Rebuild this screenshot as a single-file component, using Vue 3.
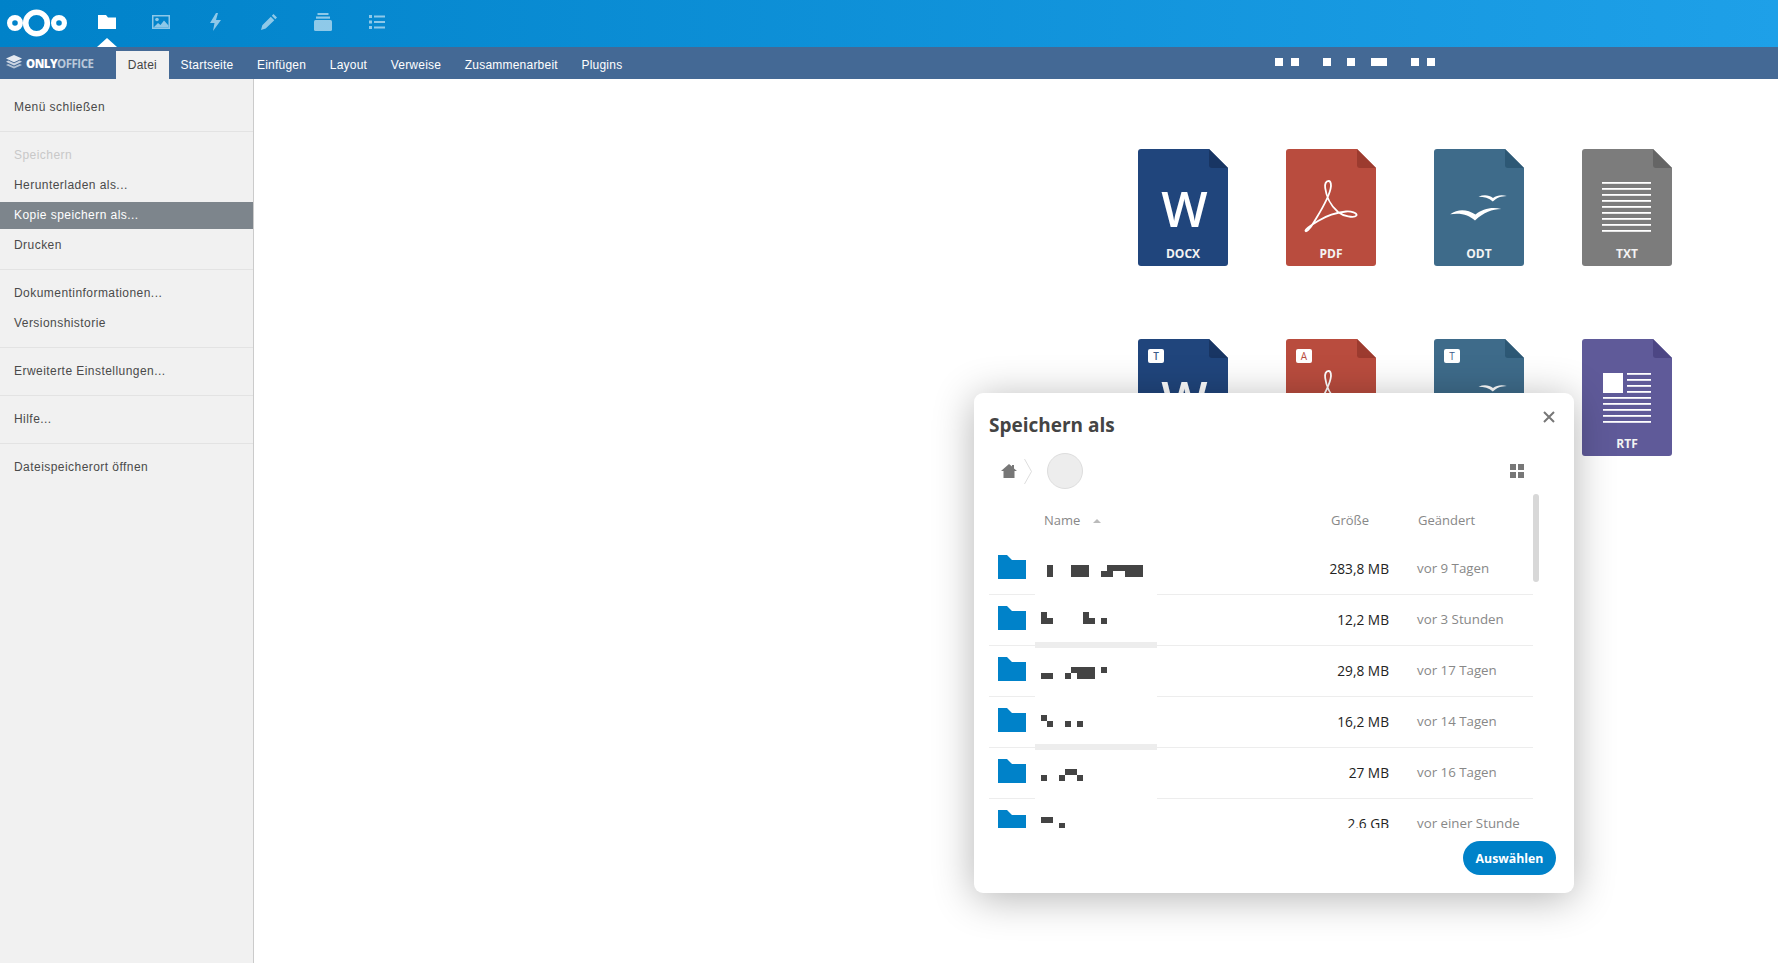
<script setup>
const sections = [
  [{ label: 'Menü schließen' }],
  [
    { label: 'Speichern', disabled: true },
    { label: 'Herunterladen als...' },
    { label: 'Kopie speichern als...', active: true },
    { label: 'Drucken' },
  ],
  [{ label: 'Dokumentinformationen...' }, { label: 'Versionshistorie' }],
  [{ label: 'Erweiterte Einstellungen...' }],
  [{ label: 'Hilfe...' }],
  [{ label: 'Dateispeicherort öffnen' }],
]

const tabs = ['Datei', 'Startseite', 'Einfügen', 'Layout', 'Verweise', 'Zusammenarbeit', 'Plugins']

// blanked out title in the tab bar: [width, gap before]
const titleBlocks = [[8, 0], [8, 8], [8, 24], [8, 16], [16, 16], [8, 24], [8, 8]]

const formats = [
  { name: 'DOCX', color: '#20457c', fold: '#183563', art: 'word' },
  { name: 'PDF', color: '#b94c3e', fold: '#9c3b2f', art: 'pdf' },
  { name: 'ODT', color: '#3e6b8a', fold: '#2d5875', art: 'odt' },
  { name: 'TXT', color: '#7c7c7c', fold: '#656565', art: 'txt' },
  { name: '', color: '#20457c', fold: '#183563', art: 'word', badge: 'T' },
  { name: '', color: '#b94c3e', fold: '#9c3b2f', art: 'pdf', badge: 'A' },
  { name: '', color: '#3e6b8a', fold: '#2d5875', art: 'odt', badge: 'T' },
  { name: 'RTF', color: '#5f5a99', fold: '#4c4684', art: 'rtf' },
]

const txtLines = [34, 40, 46, 52, 58, 64, 70, 76, 82]

// file names are pixelated in the original: [x, y, w, h]
const files = [
  { size: '283,8 MB', date: 'vor 9 Tagen', cover: 'white', blocks: [[11, 21, 6, 12], [35, 21, 18, 12], [65, 27, 12, 6], [71, 21, 36, 6], [89, 27, 18, 6]] },
  { size: '12,2 MB', date: 'vor 3 Stunden', cover: 'grey', blocks: [[5, 17, 6, 6], [5, 23, 12, 6], [47, 17, 6, 6], [47, 23, 12, 6], [65, 23, 6, 6]] },
  { size: '29,8 MB', date: 'vor 17 Tagen', cover: 'white', blocks: [[5, 27, 12, 6], [29, 27, 6, 6], [35, 21, 24, 6], [41, 27, 18, 6], [65, 21, 6, 6]] },
  { size: '16,2 MB', date: 'vor 14 Tagen', cover: 'grey', blocks: [[5, 18, 6, 6], [11, 24, 6, 6], [29, 24, 6, 6], [41, 24, 6, 6]] },
  { size: '27 MB', date: 'vor 16 Tagen', cover: 'white', blocks: [[5, 27, 6, 6], [23, 27, 6, 6], [29, 21, 12, 6], [41, 27, 6, 6]] },
  { size: '2,6 GB', date: 'vor einer Stunde', cover: 'none', blocks: [[5, 18, 12, 6], [23, 24, 6, 6]] },
]
</script>

<template>
  <div class="page">
    <header class="topbar">
      <svg class="logo" width="60" height="28" viewBox="0 0 60 28">
        <g fill="none" stroke="#fff">
          <circle cx="8" cy="14" r="5.4" stroke-width="5.2" />
          <circle cx="29.5" cy="14" r="10.8" stroke-width="5.6" />
          <circle cx="52" cy="14" r="5.4" stroke-width="5.2" />
        </g>
      </svg>
      <nav class="apps">
        <a class="app active">
          <svg width="18" height="14" viewBox="0 0 18 14"><path d="M0 0h8l2 2.5h8V14H0z" /></svg>
        </a>
        <a class="app">
          <svg width="18" height="14" viewBox="0 0 18 14">
            <path fill-rule="evenodd" d="M0 0h18v14H0zM1.5 1.5v11h15v-11z" />
            <circle cx="5" cy="4.5" r="1.8" />
            <path d="M1.5 12.5L6 8l2.5 2L12 5.5l4.5 5v2z" />
          </svg>
        </a>
        <a class="app">
          <svg width="12" height="18" viewBox="0 0 12 18"><path d="M7 0L1 10h4.5L4 18l8-11H7l2-7z" /></svg>
        </a>
        <a class="app">
          <svg width="16" height="16" viewBox="0 0 16 16"><path d="M12.5 0L16 3.5l-1.7 1.7-3.5-3.5zM9.8 2.7l3.5 3.5-8.6 8.3L0 16l1.3-4.8z" /></svg>
        </a>
        <a class="app">
          <svg width="18" height="18" viewBox="0 0 18 18">
            <rect x="3.5" width="11" height="2" />
            <rect x="2" y="3.5" width="14" height="2.2" />
            <rect y="7" width="18" height="11" rx="1.5" />
          </svg>
        </a>
        <a class="app">
          <svg width="16" height="16" viewBox="0 0 16 16">
            <path d="M0 1h3v3H0zM5 1.5h11v2H5zM0 6.5h3v3H0zM5 7h11v2H5zM0 12h3v3H0zM5 12.5h11v2H5z" />
          </svg>
        </a>
      </nav>
    </header>

    <div class="tabbar">
      <div class="brand">
        <svg width="16" height="14" viewBox="0 0 16 14" fill="#e4e9f0">
          <path d="M8 0l8 3.6L8 7.2 0 3.6z" />
          <path d="M2.2 5.6L8 8.2l5.8-2.6L16 6.8 8 10.4 0 6.8z" opacity=".85" />
          <path d="M2.2 8.9L8 11.4l5.8-2.5L16 10l-8 3.6L0 10z" opacity=".7" />
        </svg>
        <span><b>ONLY</b>OFFICE</span>
      </div>
      <div class="tabs">
        <span v-for="(tab, i) in tabs" :key="tab" class="tab" :class="{ current: i === 0 }">{{ tab }}</span>
      </div>
      <div class="doc-title">
        <i v-for="(b, i) in titleBlocks" :key="i" :style="{ width: b[0] + 'px', marginLeft: b[1] + 'px' }"></i>
      </div>
    </div>

    <div class="body">
      <aside class="sidebar">
        <div v-for="(section, i) in sections" :key="i" class="section">
          <div
            v-for="item in section"
            :key="item.label"
            class="item"
            :class="{ disabled: item.disabled, active: item.active }"
          >{{ item.label }}</div>
        </div>
      </aside>

      <main class="content">
        <div class="formats">
          <svg v-for="(f, i) in formats" :key="i" class="format" width="90" height="117" viewBox="0 0 90 117">
            <path :fill="f.color" d="M3 0H71L90 19V114a3 3 0 0 1-3 3H3a3 3 0 0 1-3-3V3a3 3 0 0 1 3-3z" />
            <path :fill="f.fold" d="M71 0L90 19H74a3 3 0 0 1-3-3z" />

            <template v-if="f.badge">
              <rect x="10" y="10" width="16" height="14" rx="2" fill="#fff" />
              <text x="18" y="21" class="badge" :class="f.art">{{ f.badge }}</text>
            </template>

            <text v-if="f.art === 'word'" x="46.5" y="78" class="word">W</text>
            <path
              v-if="f.art === 'pdf'"
              fill="none"
              stroke="#fff"
              stroke-width="1.8"
              d="M45 37C45 33 44 32 42.5 32C40 32 38.5 35 39.2 39C40 46 44 56 52 63C57 67 68 69.5 70.5 66.5C71.5 64 65 62 60 62.5C50 63.5 40 67 32 72C27 75 20 79 19.5 81.5C19.5 84 24 80 28 73C34 63 44 48 45 37Z"
            />
            <g v-if="f.art === 'odt'" fill="#fff">
              <path d="M16.2 65.3C24 59.5 33 60 41.5 65.5C48 60 58 57.5 67.2 60C58 60.5 50 63 41 71.5C35 66 27 63.5 16.2 65.3Z" />
              <path d="M44.5 47.7C50 45.5 55 46 59 49C63 46 68 45.5 72.8 47C67 47.3 63 48.5 58.8 52.5C55 49 50 47.7 44.5 47.7Z" />
            </g>
            <g v-if="f.art === 'txt'" fill="#fff">
              <rect v-for="y in txtLines" :key="y" x="20" :y="y - 1" width="49" height="1.8" />
            </g>
            <g v-if="f.art === 'rtf'" fill="#fff">
              <rect x="21" y="34" width="20" height="20" />
              <rect v-for="y in [34, 40, 46, 52]" :key="y" x="45" :y="y" width="24" height="1.8" />
              <rect v-for="y in [58, 64, 70, 76, 82]" :key="y" x="21" :y="y" width="48" height="1.8" />
            </g>

            <text x="45" y="109" class="ext">{{ f.name }}</text>
          </svg>
        </div>
      </main>
    </div>

    <section class="dialog">
      <svg class="close" width="12" height="12" viewBox="0 0 12 12"><path d="M1 1l10 10M11 1L1 11" stroke="#777" stroke-width="2" /></svg>
      <h2>Speichern als</h2>

      <div class="crumbs">
        <svg class="home" width="16" height="14" viewBox="0 0 16 14"><path d="M8 0l3 2.6V1h2v3.4L16 7h-2.5v7h-11V7H0z" fill="#777" /></svg>
        <svg class="chevron" width="8" height="25" viewBox="0 0 8 25"><path d="M.5 0l7 12.5-7 12.5" fill="none" stroke="#ddd" /></svg>
        <span class="avatar"></span>
        <svg class="view" width="14" height="14" viewBox="0 0 14 14" fill="#777">
          <rect width="6" height="6" /><rect x="8" width="6" height="6" />
          <rect y="8" width="6" height="6" /><rect x="8" y="8" width="6" height="6" />
        </svg>
      </div>

      <div class="head">
        <span class="col-name">Name <i class="sort"></i></span>
        <span class="col-size">Größe</span>
        <span class="col-date">Geändert</span>
      </div>

      <div class="list">
        <div v-for="(file, i) in files" :key="i" class="row">
          <svg class="folder" width="28" height="24" viewBox="0 0 28 24">
            <path fill="#0082c9" d="M0 0h9l5 5h14v19H0z" />
          </svg>
          <div class="name" :class="file.cover">
            <svg width="121" height="50" viewBox="0 0 121 50" fill="#444">
              <rect v-for="(b, j) in file.blocks" :key="j" :x="b[0]" :y="b[1]" :width="b[2]" :height="b[3]" />
            </svg>
          </div>
          <span class="size">{{ file.size }}</span>
          <span class="date">{{ file.date }}</span>
        </div>
      </div>
      <div class="scrollbar"></div>

      <div class="footer">
        <button class="choose">Auswählen</button>
      </div>
    </section>
  </div>
</template>

<style>
html, body {
  margin: 0;
  background: #fff;
}
</style>

<style scoped>
.page {
  position: relative;
  width: 1778px;
  height: 963px;
  overflow: hidden;
  display: flex;
  flex-direction: column;
  font-family: "Liberation Sans", Arial, sans-serif;
}

.topbar {
  height: 47px;
  flex: none;
  display: flex;
  align-items: flex-start;
  background: linear-gradient(90deg, #0082c9, #1ea0e8);
}
.logo {
  margin: 9px 0 0 7px;
  width: 60px;
  flex: none;
}
.apps {
  display: flex;
  margin-left: 13px;
}
.app {
  position: relative;
  width: 54px;
  height: 47px;
  box-sizing: border-box;
  padding-bottom: 3px;
  display: flex;
  align-items: center;
  justify-content: center;
}
.app svg {
  fill: #fff;
  opacity: .55;
}
.app.active svg {
  opacity: 1;
}
.app.active::after {
  content: "";
  position: absolute;
  bottom: 0;
  left: 17px;
  border-left: 10px solid transparent;
  border-right: 10px solid transparent;
  border-bottom: 9px solid #fff;
}

.tabbar {
  height: 32px;
  flex: none;
  display: flex;
  background: #446995;
  color: #fff;
  font-size: 12px;
  letter-spacing: .22px;
}
.brand {
  width: 116px;
  flex: none;
  box-sizing: border-box;
  padding: 8px 0 0 6px;
  display: flex;
  align-items: flex-start;
  gap: 4px;
  font: 700 11.5px/17px "Open Sans", sans-serif;
  letter-spacing: -.5px;
  color: #b9c8da;
}
.brand b {
  color: #fff;
}
.tabs {
  display: flex;
  align-items: flex-end;
}
.tab {
  height: 28px;
  line-height: 29px;
  padding: 0 11.8px;
}
.tab.current {
  background: #f1f1f1;
  color: #444;
}
.doc-title {
  margin-left: auto;
  padding: 11px 343px 0 0;
  display: flex;
  align-items: flex-start;
}
.doc-title i {
  display: block;
  height: 8px;
  background: #fff;
}

.body {
  flex: 1;
  display: flex;
  min-height: 0;
}
.sidebar {
  width: 254px;
  flex: none;
  box-sizing: border-box;
  background: #f1f1f1;
  border-right: 1px solid #cbcbcb;
  color: #4a4a4a;
  font-size: 12px;
  letter-spacing: .45px;
}
.section {
  display: flex;
  flex-direction: column;
  padding: 8px 0 9px;
  border-bottom: 1px solid #e3e3e3;
}
.section:first-child {
  padding-top: 13px;
}
.section:last-child {
  border-bottom: 0;
}
.item {
  height: 27px;
  line-height: 27px;
  margin: 2px 0 1px;
  padding-left: 14px;
}
.item.disabled {
  color: #c8c8c8;
}
.item.active {
  background: #7d858c;
  color: #fff;
}

.content {
  flex: 1;
  display: flex;
  justify-content: flex-end;
  padding: 70px 106px 0 0;
}
.formats {
  display: grid;
  grid-template-columns: repeat(4, 90px);
  grid-auto-rows: 117px;
  column-gap: 58px;
  row-gap: 73px;
}
.format text {
  text-anchor: middle;
  fill: #fff;
  font-family: "Open Sans", sans-serif;
}
.format .ext {
  font-size: 12px;
  font-weight: 700;
  fill: #f3f3f3;
}
.format .word {
  font-size: 49px;
  font-weight: 600;
}
.format .badge {
  font-size: 10px;
  fill: #3a5a88;
}
.format .badge.pdf {
  fill: #b94c3e;
}

.dialog {
  position: absolute;
  left: 974px;
  top: 393px;
  width: 600px;
  height: 500px;
  box-sizing: border-box;
  padding: 0 15px;
  background: #fff;
  border-radius: 9px;
  box-shadow: 0 5px 40px rgba(0, 0, 0, .3);
  font-family: "Open Sans", sans-serif;
  color: #444;
}
.close {
  position: absolute;
  left: 569px;
  top: 18px;
}
h2 {
  margin: 0;
  height: 60px;
  line-height: 64px;
  font-size: 19px;
  font-weight: 700;
  color: #444;
}
.crumbs {
  height: 36px;
  display: flex;
  align-items: center;
  padding-right: 35px;
}
.home {
  margin-left: 12px;
}
.chevron {
  margin-left: 7px;
}
.avatar {
  width: 34px;
  height: 34px;
  margin-left: 15px;
  border: 1px solid #ddd;
  border-radius: 50%;
  background: #ededed;
}
.view {
  margin-left: auto;
}

.head,
.row {
  width: 544px;
  display: grid;
  grid-template-columns: 47px 121px 232px 1fr;
}
.head {
  height: 46px;
  box-sizing: border-box;
  padding-bottom: 3px;
  margin-top: 9px;
  align-items: center;
  font-size: 13px;
  color: #888;
}
.col-name {
  grid-column: 2;
  padding-left: 8px;
  white-space: nowrap;
}
.sort {
  display: inline-block;
  margin: 0 0 2px 9px;
  border-left: 4.5px solid transparent;
  border-right: 4.5px solid transparent;
  border-bottom: 4px solid #bbb;
}
.col-size {
  grid-column: 3;
  text-align: right;
  padding-right: 20px;
}
.col-date {
  grid-column: 4;
  padding-left: 29px;
}

.list {
  width: 544px;
  height: 284px;
  overflow: hidden;
}
.row {
  height: 51px;
  box-sizing: border-box;
  border-bottom: 1px solid #ededed;
  align-items: center;
}
.folder {
  align-self: start;
  margin: 11px 0 0 9px;
}
.name {
  position: relative;
  height: 50px;
}
.name svg {
  display: block;
}
.name.white::after,
.name.grey::after {
  content: "";
  position: absolute;
  left: -1px;
  right: 0;
  z-index: 1;
}
.name.white::after {
  bottom: -1px;
  height: 1px;
  background: #fff;
}
.name.grey::after {
  bottom: -3px;
  height: 6px;
  background: #ededed;
}
.size {
  text-align: right;
  color: #222;
  font-size: 13.7px;
  padding-bottom: 2px;
}
.date {
  padding: 0 0 2px 28px;
  color: #888;
  font-size: 13.3px;
  white-space: nowrap;
}

.scrollbar {
  position: absolute;
  left: 559px;
  top: 101px;
  width: 6px;
  height: 88px;
  border-radius: 3px;
  background: #d8d8d8;
}

.footer {
  display: flex;
  justify-content: flex-end;
  margin-top: 13px;
  padding-right: 3px;
}
.choose {
  width: 93px;
  height: 34px;
  padding: 0;
  border: 0;
  border-radius: 17px;
  background: #0082c9;
  color: #fff;
  font: 700 12.3px "Open Sans", sans-serif;
}
</style>
